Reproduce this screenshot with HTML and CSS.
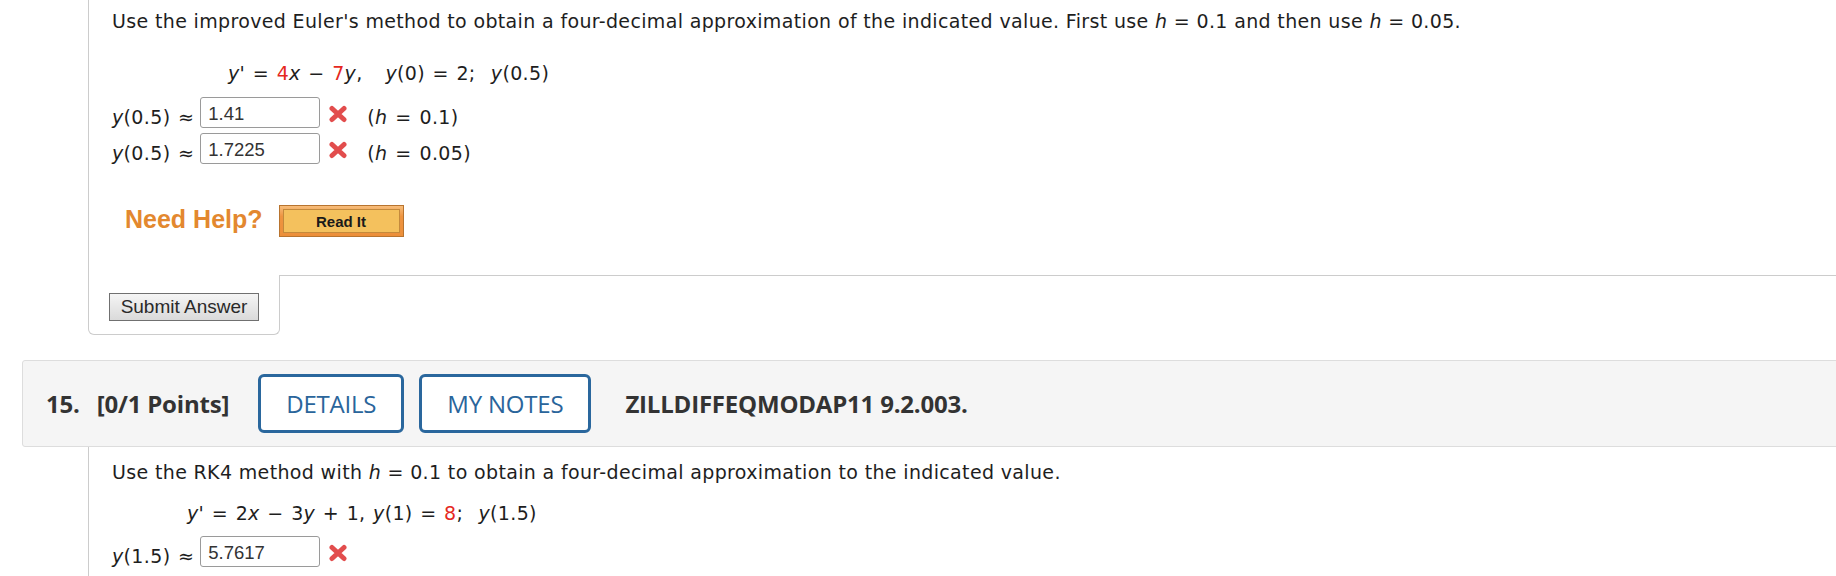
FILE: index.html
```html
<!DOCTYPE html>
<html lang="en">
<head>
<meta charset="utf-8">
<title>Improved Euler / RK4</title>
<link rel="stylesheet" href="styles.css">
</head>
<body>
<div class="page">
  <section class="question">
    <div class="q-body q-body-first">
      <p class="prompt">Use the improved Euler's method to obtain a four-decimal approximation of the indicated value. First use <i>h</i> = 0.1 and then use <i>h</i> = 0.05.</p>
      <p class="eq eq-first"><i>y</i>' = <span class="red">4</span><i>x</i> − <span class="red">7</span><i>y</i>,&nbsp;&nbsp; <i>y</i>(0) = 2;&nbsp; <i>y</i>(0.5)</p>
      <div class="answers">
        <div class="ans-row">
          <span class="ans-label"><i>y</i>(0.5) ≈</span>
          <input class="field" type="text" value="1.41" readonly>
          <svg class="xmark" viewBox="0 0 20 18" aria-hidden="true"><path d="M4 3.5 L16 14.5 M16 3.5 L4 14.5"/></svg>
          <span class="note">(<i>h</i> = 0.1)</span>
        </div>
        <div class="ans-row">
          <span class="ans-label"><i>y</i>(0.5) ≈</span>
          <input class="field" type="text" value="1.7225" readonly>
          <svg class="xmark" viewBox="0 0 20 18" aria-hidden="true"><path d="M4 3.5 L16 14.5 M16 3.5 L4 14.5"/></svg>
          <span class="note">(<i>h</i> = 0.05)</span>
        </div>
      </div>
      <div class="help">
        <span class="need-help">Need Help?</span>
        <span class="read-it"><span class="read-it-inner">Read It</span></span>
      </div>
    </div>
    <div class="q-footer">
      <div class="submit-cell"><button class="submit" type="button">Submit Answer</button></div>
      <div class="footer-rule"></div>
    </div>
  </section>

  <section class="question">
    <header class="q-head">
      <span class="q-num">15.</span>
      <span class="q-points">[0/1 Points]</span>
      <span class="q-btn">DETAILS</span>
      <span class="q-btn">MY NOTES</span>
      <span class="q-code">ZILLDIFFEQMODAP11 9.2.003.</span>
    </header>
    <div class="q-body q-body-second">
      <p class="prompt prompt-second">Use the RK4 method with <i>h</i> = 0.1 to obtain a four-decimal approximation to the indicated value.</p>
      <p class="eq eq-second"><i>y</i>' = 2<i>x</i> − 3<i>y</i> + 1, <i>y</i>(1) = <span class="red">8</span>;&nbsp; <i>y</i>(1.5)</p>
      <div class="answers answers-second">
        <div class="ans-row">
          <span class="ans-label"><i>y</i>(1.5) ≈</span>
          <input class="field" type="text" value="5.7617" readonly>
          <svg class="xmark" viewBox="0 0 20 18" aria-hidden="true"><path d="M4 3.5 L16 14.5 M16 3.5 L4 14.5"/></svg>
        </div>
      </div>
    </div>
  </section>
</div>
</body>
</html>
```

FILE: styles.css
```css
html, body {
  margin: 0;
  padding: 0;
  background: #ffffff;
}

body {
  font-family: "DejaVu Sans", Verdana, sans-serif;
  font-size: 19px;
  letter-spacing: 0.35px;
  color: #1e1e1e;
  overflow: hidden;
}

.page {
  width: 1836px;
  height: 576px;
  overflow: hidden;
}

.q-body {
  margin-left: 88px;
  border-left: 1px solid #cccccc;
  padding-left: 23px;
}

.q-body-first {
  padding-top: 10px;
  padding-bottom: 38px;
}

.prompt {
  margin: 0;
  line-height: 23px;
  white-space: nowrap;
}

.eq {
  margin: 0;
  line-height: 23px;
  white-space: nowrap;
  word-spacing: 1.2px;
}

.eq-first {
  margin-top: 29px;
  padding-left: 116px;
}

.red {
  color: #e5281e;
}

.answers {
  margin-top: 12px;
  display: flex;
  flex-direction: column;
  gap: 5px;
}

.ans-row {
  display: flex;
  align-items: center;
  height: 31px;
}

.ans-label {
  white-space: nowrap;
  padding-top: 9px;
  margin-right: 6px;
  word-spacing: 1.2px;
}

.field {
  box-sizing: border-box;
  width: 120px;
  height: 31px;
  margin: 0;
  padding: 2px 0 0 7px;
  border: 1px solid #9a9a9a;
  border-radius: 3px;
  font-family: "Liberation Sans", Arial, sans-serif;
  font-size: 18.5px;
  letter-spacing: 0;
  color: #333333;
  background: #ffffff;
  outline: none;
}

.xmark {
  width: 20px;
  height: 18px;
  margin-left: 8px;
  margin-top: 2px;
}

.xmark path {
  fill: none;
  stroke: #e24d4d;
  stroke-width: 5;
  stroke-linecap: round;
}

.note {
  margin-left: 19px;
  padding-top: 9px;
  white-space: nowrap;
  word-spacing: 1.5px;
}

.help {
  margin-top: 41px;
  padding-left: 13px;
  display: flex;
  align-items: center;
  height: 32px;
  letter-spacing: 0;
}

.need-help {
  font-family: "Liberation Sans", Arial, sans-serif;
  font-weight: bold;
  font-size: 25px;
  color: #e3882f;
  margin-top: -3px;
}

.read-it {
  box-sizing: border-box;
  margin-left: 16px;
  width: 125px;
  height: 32px;
  padding: 3px;
  border: 1px solid #b8742f;
  background: linear-gradient(#f7bd7a, #ee9440 35%, #ec8f3a);
  display: flex;
}

.read-it-inner {
  flex: 1;
  border: 1px solid #c48a3c;
  background: #f4c15d;
  font-family: "Liberation Sans", Arial, sans-serif;
  font-weight: bold;
  font-size: 15px;
  color: #1a1a1a;
  display: flex;
  align-items: center;
  justify-content: center;
}

.q-footer {
  display: flex;
}

.submit-cell {
  box-sizing: border-box;
  margin-left: 88px;
  width: 192px;
  padding: 18px 0 13px 20px;
  border: 1px solid #cccccc;
  border-top: none;
  border-radius: 0 0 6px 6px;
}

.submit {
  box-sizing: border-box;
  width: 150px;
  height: 28px;
  margin: 0;
  padding: 0;
  border: 1px solid #707070;
  border-radius: 0;
  background: linear-gradient(#f5f5f5, #dadada);
  font-family: "Liberation Sans", Arial, sans-serif;
  font-size: 19px;
  letter-spacing: 0;
  color: #2a2a2a;
  display: block;
}

.footer-rule {
  flex: 1;
  border-top: 1px solid #cccccc;
}

.q-head {
  margin-top: 25px;
  margin-left: 22px;
  margin-right: -10px;
  border: 1px solid #dddddd;
  border-radius: 3px;
  background: #f5f5f5;
  padding: 13px 0 13px 23px;
  display: flex;
  align-items: center;
  font-family: "Open Sans", "Noto Sans", sans-serif;
  font-size: 24px;
  letter-spacing: -0.2px;
  color: #333333;
}

.q-num,
.q-points,
.q-code {
  font-weight: bold;
  white-space: nowrap;
}

.q-points {
  margin-left: 17px;
}

.q-btn {
  box-sizing: border-box;
  height: 59px;
  padding: 0 25px;
  border: 3px solid #2a679d;
  border-radius: 6px;
  background: #ffffff;
  color: #2a659b;
  display: flex;
  align-items: center;
  white-space: nowrap;
  margin-left: 15px;
}

.q-points + .q-btn {
  margin-left: 29px;
}

.q-code {
  margin-left: 34px;
}

.q-body-second {
  padding-top: 14px;
  height: 200px;
}

.eq-second {
  margin-top: 18px;
  padding-left: 75px;
}

.answers-second {
  margin-top: 11px;
}
```
